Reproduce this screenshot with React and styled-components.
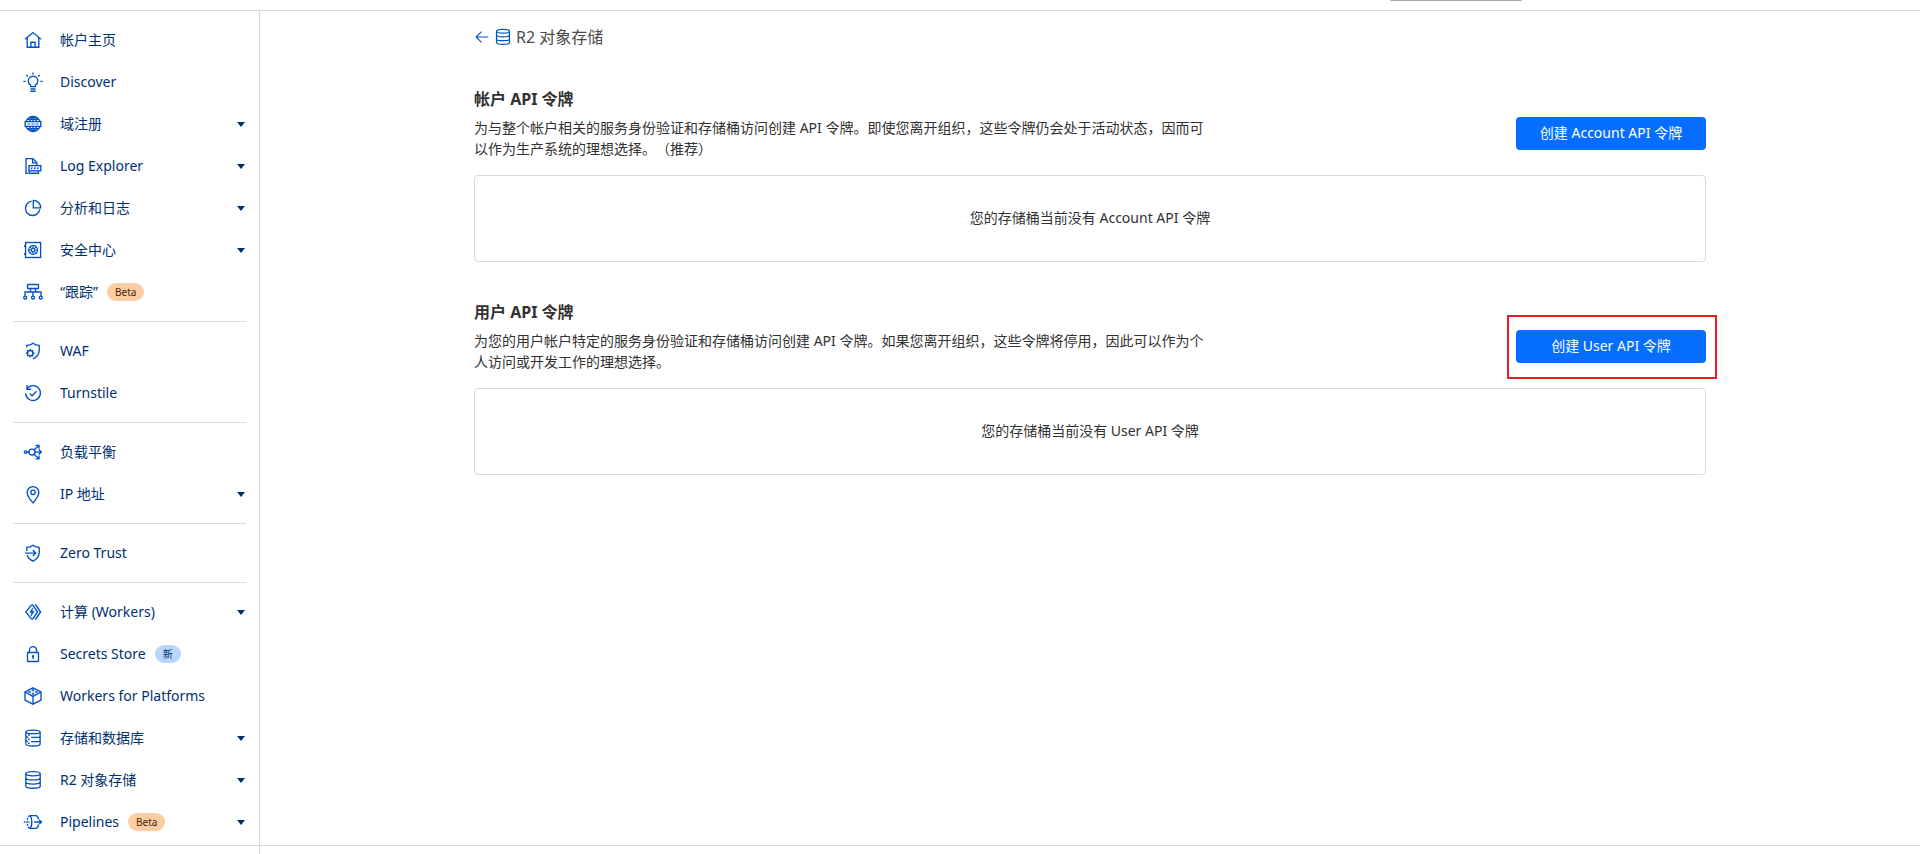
import React from "react";
import styled, { createGlobalStyle } from "styled-components";

const GlobalStyle = createGlobalStyle`
  * {
    box-sizing: border-box;
  }

  body {
    margin: 0;
    background: #fff;
    color: #313131;
    font-family: "Noto Sans", "Noto Sans CJK SC", sans-serif;
    font-size: 14px;
    line-height: 21px;
    text-spacing-trim: space-all;
  }
`;

/* ---------- icons ---------- */

const Svg = styled.svg`
  flex: none;
  width: ${(props) => props.$size || 20}px;
  height: ${(props) => props.$size || 20}px;
  fill: none;
  stroke: #0051c3;
  stroke-width: 1.35;
`;

const icons = {
  home: (
    <>
      <path d="M2 9.2 10 2.6l8 6.6" />
      <path d="M4.2 7.6v9.6h11.6V7.6" />
      <path d="M7.900 17.200v-5h4.200v5" />
    </>
  ),
  bulb: (
    <>
      <path d="M7.600 14.600v-1.700C6 12 5.200 10.600 5.200 9a4.800 4.800 0 0 1 9.600 0c0 1.600-.8 3-2.400 3.900v1.700z" />
      <path d="M7.400 17h5.200M7.400 19.200h5.200M10 .4v2M.4 9.400h2.200M17.400 9.400h2.200M3.300 2.900l1.500 1.500M16.700 2.900l-1.500 1.500" />
    </>
  ),
  globe: (
    <>
      <circle cx="10" cy="10" r="7.500" />
      <path d="M10 2.500v5M10 12.500v5M6.600 7.500C7 5 8.300 3.300 10 2.500c1.700.8 3 2.500 3.400 5M6.600 12.500c.4 2.500 1.700 4.200 3.400 5 1.700-.8 3-2.500 3.400-5M4 5.400h12M4 14.600h12" />
      <rect x="2.200" y="7.600" width="15.600" height="4.800" fill="#fff" />
      <path d="M4.500 10h3M8.500 10h3M12.500 10h3" strokeOpacity=".6" />
    </>
  ),
  log: (
    <>
      <path d="M5 17.400H3V2.600h6.800l4 4v2.600" />
      <path d="M9.600 2.600v4.200h4.200" />
      <rect x="6" y="9.600" width="11.800" height="5.200" />
      <path d="M8.400 13.200l.8-2M11.400 13.200l.8-2M14.400 13.200l.8-2M6 17.200h9.400v-2.400M6 14.800v2.400" />
    </>
  ),
  pie: (
    <>
      <path d="M8.600 3.200a7.200 7.200 0 1 0 8.200 8.200" />
      <path d="M10.300 2.400v7.400h7.400a7.400 7.400 0 0 0-7.400-7.400z" />
    </>
  ),
  vault: (
    <>
      <rect x="2.600" y="2.500" width="15" height="15" />
      <circle cx="10.100" cy="10" r="4.400" />
      <circle cx="10.100" cy="10" r="1.800" />
      <path d="M10.100 5.500V8M10.100 12v2.500M5.600 10h2.500M12.100 10h2.500M6.900 6.800l1.800 1.800M11.500 11.400l1.800 1.800M13.300 6.800l-1.800 1.800M8.700 11.400l-1.800 1.800M1.600 5v2M1.600 13v2" strokeWidth="1" />
    </>
  ),
  trace: (
    <>
      <rect x="4.500" y="2.500" width="11" height="4" rx=".6" />
      <path d="M7.500 6.500v3.500M12.500 6.500v3.500M2 14v-4h16v4M10 10v4" />
      <circle cx="2.200" cy="15.600" r="1.500" />
      <circle cx="10" cy="15.600" r="1.500" />
      <circle cx="17.800" cy="15.600" r="1.500" />
    </>
  ),
  waf: (
    <>
      <path d="M3.800 6.600V4.400C6.400 4.300 8.400 3.500 10 2.200c1.600 1.300 3.600 2.100 6.200 2.200v5c0 3.700-2.400 6.500-6.200 8.600" />
      <circle cx="7.200" cy="12.200" r="2.700" />
      <path d="M7.200 7.900v1.600M7.200 14.900v1.600M2.900 12.200h1.600M9.900 12.200h1.600M4.200 9.200l1.100 1.100M9.100 14.100l1.100 1.100M10.200 9.200l-1.100 1.100M5.300 14.100l-1.100 1.100" />
    </>
  ),
  turnstile: (
    <>
      <path d="M4.100 5.600a7.400 7.400 0 1 1-1.500 4.800" />
      <path d="M4 2v4.200h4.200M6.700 10.400l2.400 2.400 4.400-4.600" />
    </>
  ),
  balance: (
    <>
      <circle cx="2.600" cy="10.100" r="1.300" />
      <circle cx="9" cy="10.100" r="3" />
      <path d="M3.900 10.100H6M12 10.100h6M11 7.900l4.900-4.400M11 12.300l4.900 4.400M12.600 3.400h3.400v3.400M12.600 16.800h3.400v-3.400M15.700 7.600l2.600 2.500-2.600 2.500" />
    </>
  ),
  pin: (
    <>
      <path d="M10 18.900c3.400-4 5.800-7.200 5.800-10.500a5.800 5.800 0 0 0-11.600 0c0 3.300 2.400 6.500 5.800 10.500z" />
      <circle cx="10" cy="8.300" r="2.200" />
    </>
  ),
  zeroTrust: (
    <>
      <path d="M3.800 8V4.400C6.400 4.300 8.400 3.500 10 2.200c1.600 1.300 3.600 2.100 6.200 2.200v5.400c0 3.700-2.400 6.400-6.200 8.400-2.900-1.500-5-3.500-5.800-6.200" />
      <path d="M2 10.100h10.600M9.800 7.100l3 3-3 3" />
    </>
  ),
  workers: (
    <>
      <path d="M8.800 2.600 2.800 10l6 7.400M9.400 2.500l5.200 7.500-5.200 7.500M12.400 2.500 17.600 10l-5.200 7.500" />
      <path d="M9.800 5.800 6.700 10.600h2.100l-.8 3.600 3.200-5H9z" fill="#0051c3" strokeWidth=".6" />
    </>
  ),
  lock: (
    <>
      <rect x="4.500" y="8.500" width="11" height="9" rx=".4" />
      <path d="M6.400 8.500V6.200a3.600 3.600 0 0 1 7.200 0v2.300M10 12v3" />
      <circle cx="10" cy="12.200" r=".5" />
    </>
  ),
  platforms: (
    <>
      <path d="M10 1.800 18 6v8l-8 4.200L2 14V6z" />
      <path d="M2 6l8 4.400L18 6M10 10.400v7.800" />
      <g strokeWidth="1">
        <ellipse cx="10" cy="4.300" rx="1.200" ry=".6" />
        <ellipse cx="6.600" cy="6" rx="1.200" ry=".6" />
        <ellipse cx="13.400" cy="6" rx="1.200" ry=".6" />
        <ellipse cx="10" cy="7.800" rx="1.200" ry=".6" />
      </g>
    </>
  ),
  database: (
    <>
      <path d="M2.900 15.800V4c0-2.600 14.200-2.600 14.200 0v12c0 2.600-14.200 2.600-14.200 0" />
      <path d="M2.900 4c0 2.200 14.200 2.200 14.200 0M8.200 9.400h5.400c2 0 3.500-.4 3.500-.9M8.200 13.600h5.400c2 0 3.500-.4 3.500-.9M2.900 8.600l2.300.8M2.900 12.800l2.300.8M5 7h1.600M5 11.200h1.600M5 15.400h1.600" />
    </>
  ),
  storage: (
    <>
      <ellipse cx="10" cy="3.700" rx="7.200" ry="2.100" />
      <path d="M2.800 3.700v12.500c0 2.700 14.400 2.700 14.400 0V3.700M2.800 7.900c0 2.700 14.400 2.700 14.400 0M2.800 12.100c0 2.700 14.400 2.700 14.400 0" />
    </>
  ),
  pipelines: (
    <>
      <path d="M6.600 3.600h6.800l1.800 2v2M6.600 16.400h6.800l1.800-2v-2" />
      <path d="M6.600 3.600c2.900 1.600 2.900 11.200 0 12.800" />
      <path d="M6.600 3.600c-3.300 1.600-3.300 11.200 0 12.800" strokeDasharray="2 1" />
      <path d="M.8 10h1.600M5.600 10h1M11.200 10h7.200M16.200 7.700l2.300 2.300-2.300 2.300" />
    </>
  ),
  back: <path d="M19 10H2M9.200 2.200 1.600 10l7.600 7.800" strokeWidth="1.600" />,
};

const Icon = ({ name, size }) => (
  <Svg viewBox="0 0 20 20" $size={size} aria-hidden="true">
    {icons[name]}
  </Svg>
);

/* ---------- page frame ---------- */

const Page = styled.div`
  display: flex;
  flex-direction: column;
  min-height: 100vh;
`;

const TopBar = styled.header`
  display: flex;
  justify-content: flex-end;
  height: 11px;
  padding-right: 398px;
  border-bottom: 1px solid #d9d9d9;
`;

const TopBarEdge = styled.div`
  width: 132px;
  height: 1px;
  border-radius: 0 0 2px 2px;
  background: #a9a9a9;
`;

const Body = styled.div`
  display: flex;
  flex: 1;
`;

const Footer = styled.footer`
  display: flex;
  height: 9px;
  border-top: 1px solid #d9d9d9;
`;

const FooterSide = styled.div`
  width: 260px;
  border-right: 1px solid #d9d9d9;
`;

/* ---------- sidebar ---------- */

const Sidebar = styled.nav`
  flex: none;
  width: 260px;
  padding: 8px 13px 2px;
  border-right: 1px solid #d9d9d9;
`;

const NavGroup = styled.ul`
  margin: 0;
  padding: 0;
  list-style: none;

  & + & {
    margin-top: 8px;
    padding-top: 8px;
    border-top: 1px solid #d9d9d9;
  }
`;

const NavItem = styled.a`
  display: flex;
  align-items: center;
  width: 100%;
  height: 42px;
  padding: 0 1px 0 10px;
  border: 0;
  background: none;
  color: #003070;
  font: inherit;
  text-align: left;
  text-decoration: none;
  cursor: pointer;
`;

const NavLabel = styled.span`
  margin-left: 17px;
  padding-bottom: 2px;
`;

const Badge = styled.span`
  margin-left: 9px;
  padding: 0 8px;
  border-radius: 9px;
  background: ${(props) => (props.$tone === "blue" ? "#b9d6ff" : "#fbcda5")};
  color: ${(props) => (props.$tone === "blue" ? "#003070" : "#482303")};
  font-size: 10px;
  line-height: 18px;
`;

const Caret = styled.span`
  margin-left: auto;
  border: 4px solid transparent;
  border-top: 5px solid #003070;
  border-bottom: 0;
`;

/* ---------- content ---------- */

const Main = styled.main`
  flex: 1;
  min-width: 0;
  padding: 14px 24px;
`;

const Content = styled.div`
  max-width: 1232px;
  margin: 0 auto;
`;

const Breadcrumb = styled.div`
  display: flex;
  align-items: center;
  height: 24px;
  margin-bottom: 38px;
  color: #4a4a4a;
  font-size: 16px;
`;

const BackLink = styled.a`
  display: flex;
  align-items: center;
  gap: 5px;
  margin-right: 4px;
  padding-left: 1px;
`;

const Section = styled.section`
  margin-bottom: 38px;
`;

const SectionTitle = styled.h2`
  margin: 0 0 6px;
  font-size: 16px;
  font-weight: 700;
  line-height: 24px;
`;

const SectionHead = styled.div`
  display: flex;
  align-items: flex-start;
  justify-content: space-between;
  margin-bottom: 16px;
`;

const Description = styled.p`
  width: 60%;
  margin: 0;
`;

const ButtonWrap = styled.div`
  position: relative;
`;

const Highlight = styled.div`
  position: absolute;
  top: -15px;
  right: -11px;
  bottom: -16px;
  left: -9px;
  border: 2px solid #ed1c24;
  pointer-events: none;
`;

const CreateButton = styled.button`
  display: block;
  width: 190px;
  height: 33px;
  padding: 0 0 2px;
  border: 0;
  border-radius: 4px;
  background: #056dff;
  color: #fff;
  font: inherit;
  cursor: pointer;
`;

const EmptyState = styled.div`
  display: flex;
  align-items: center;
  justify-content: center;
  height: 87px;
  padding-bottom: 2px;
  border: 1px solid #d9d9d9;
  border-radius: 4px;
`;

const navGroups = [
  [
    { icon: "home", label: "帐户主页" },
    { icon: "bulb", label: "Discover" },
    { icon: "globe", label: "域注册", expandable: true },
    { icon: "log", label: "Log Explorer", expandable: true },
    { icon: "pie", label: "分析和日志", expandable: true },
    { icon: "vault", label: "安全中心", expandable: true },
    { icon: "trace", label: "“跟踪”", badge: "Beta" },
  ],
  [
    { icon: "waf", label: "WAF" },
    { icon: "turnstile", label: "Turnstile" },
  ],
  [
    { icon: "balance", label: "负载平衡" },
    { icon: "pin", label: "IP 地址", expandable: true },
  ],
  [{ icon: "zeroTrust", label: "Zero Trust" }],
  [
    { icon: "workers", label: "计算 (Workers)", expandable: true },
    { icon: "lock", label: "Secrets Store", badge: "新", tone: "blue" },
    { icon: "platforms", label: "Workers for Platforms" },
    { icon: "database", label: "存储和数据库", expandable: true },
    { icon: "storage", label: "R2 对象存储", expandable: true },
    { icon: "pipelines", label: "Pipelines", badge: "Beta", expandable: true },
  ],
];

const tokenSections = [
  {
    title: "帐户 API 令牌",
    description:
      "为与整个帐户相关的服务身份验证和存储桶访问创建 API 令牌。即使您离开组织，这些令牌仍会处于活动状态，因而可以作为生产系统的理想选择。（推荐）",
    button: "创建 Account API 令牌",
    empty: "您的存储桶当前没有 Account API 令牌",
  },
  {
    title: "用户 API 令牌",
    description:
      "为您的用户帐户特定的服务身份验证和存储桶访问创建 API 令牌。如果您离开组织，这些令牌将停用，因此可以作为个人访问或开发工作的理想选择。",
    button: "创建 User API 令牌",
    empty: "您的存储桶当前没有 User API 令牌",
    highlighted: true,
  },
];

const NavEntry = ({ item }) => {
  const elementProps = item.expandable
    ? { as: "button", type: "button", "aria-expanded": false }
    : { href: "#" };

  return (
    <li>
      <NavItem {...elementProps}>
        <Icon name={item.icon} />
        <NavLabel>{item.label}</NavLabel>
        {item.badge && <Badge $tone={item.tone}>{item.badge}</Badge>}
        {item.expandable && <Caret />}
      </NavItem>
    </li>
  );
};

const TokenSection = ({ section }) => (
  <Section>
    <SectionTitle>{section.title}</SectionTitle>
    <SectionHead>
      <Description>{section.description}</Description>
      <ButtonWrap>
        <CreateButton type="button">{section.button}</CreateButton>
        {section.highlighted && <Highlight />}
      </ButtonWrap>
    </SectionHead>
    <EmptyState>{section.empty}</EmptyState>
  </Section>
);

const App = () => {
  return (
    <React.Fragment>
      <GlobalStyle />
      <Page lang="zh-CN">
        <TopBar>
          <TopBarEdge />
        </TopBar>
        <Body>
          <Sidebar>
            {navGroups.map((group) => (
              <NavGroup key={group[0].label}>
                {group.map((item) => (
                  <NavEntry key={item.label} item={item} />
                ))}
              </NavGroup>
            ))}
          </Sidebar>
          <Main>
            <Content>
              <Breadcrumb>
                <BackLink href="#" aria-label="返回">
                  <Icon name="back" size={14} />
                  <Icon name="storage" size={18} />
                </BackLink>
                <span>R2 对象存储</span>
              </Breadcrumb>
              {tokenSections.map((section) => (
                <TokenSection key={section.title} section={section} />
              ))}
            </Content>
          </Main>
        </Body>
        <Footer>
          <FooterSide />
        </Footer>
      </Page>
    </React.Fragment>
  );
};

export default App;
